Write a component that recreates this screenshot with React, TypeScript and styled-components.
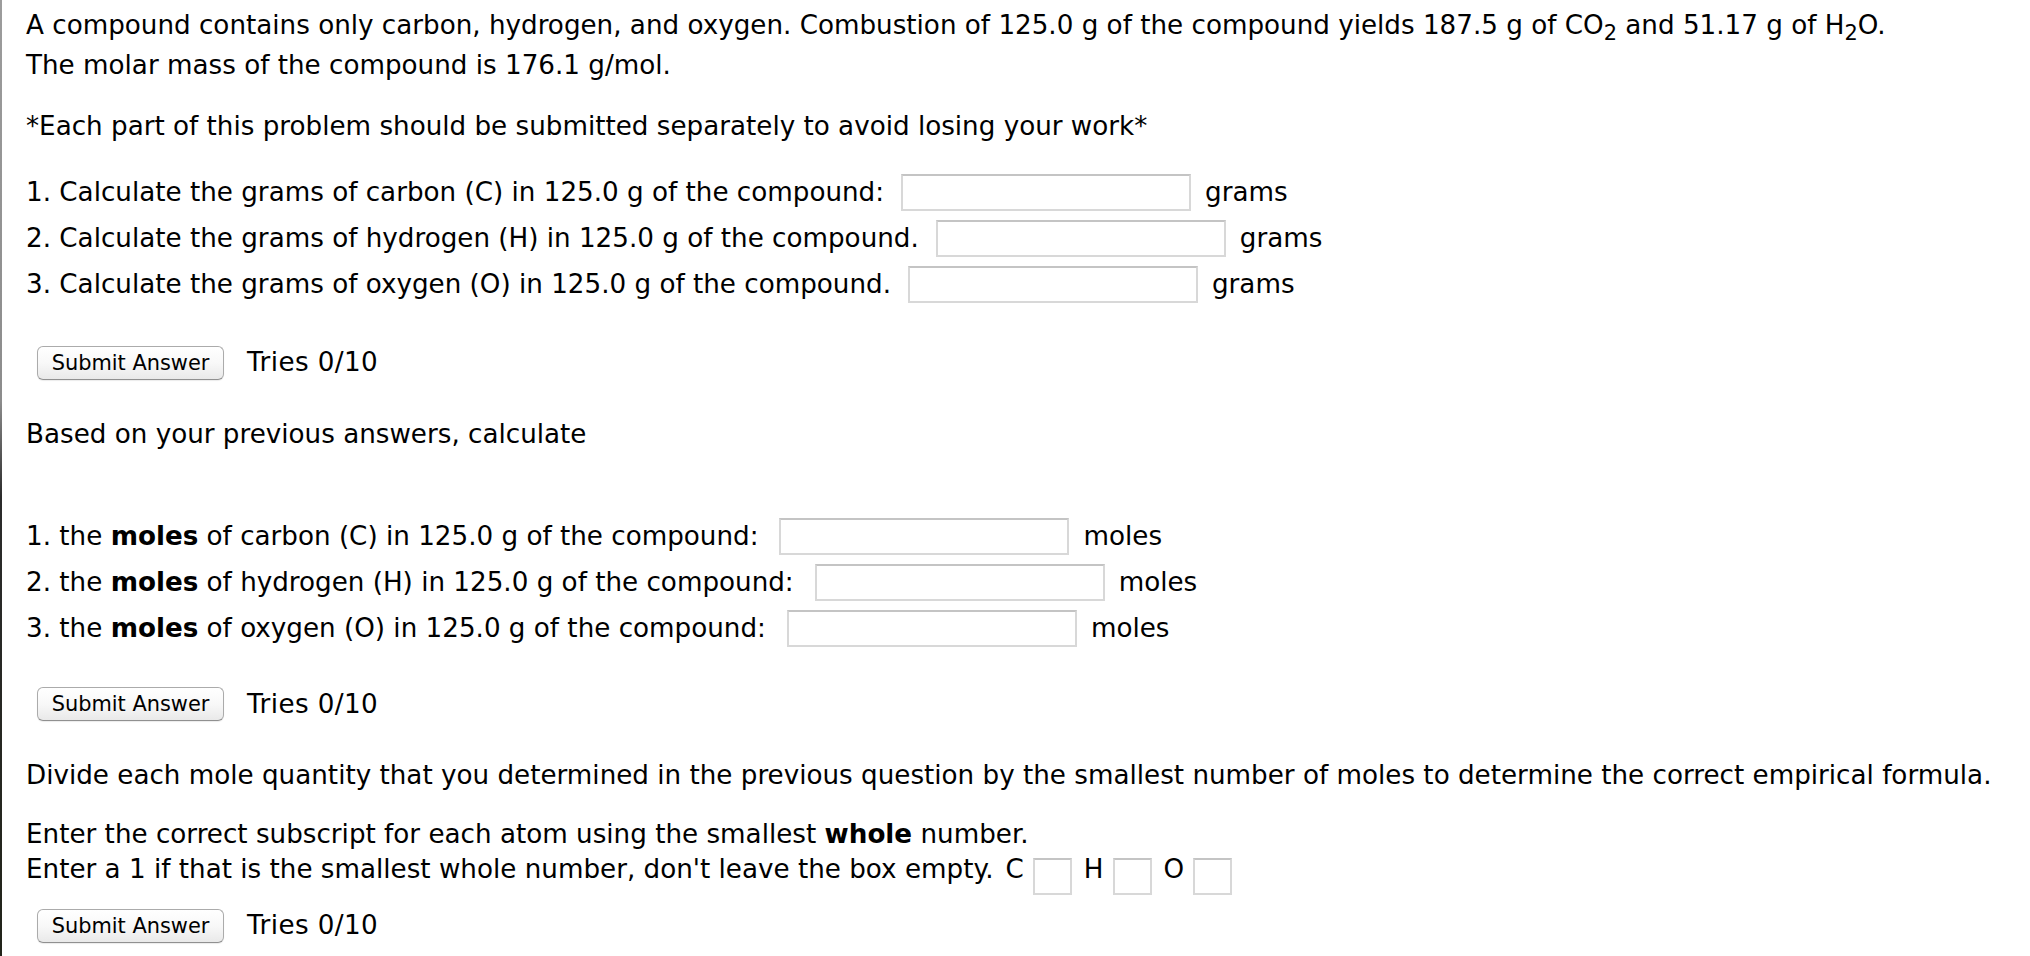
import React from 'react'
import styled, { createGlobalStyle } from 'styled-components'

const GlobalStyle = createGlobalStyle`
  html, body {
    margin: 0;
    padding: 0;
    background: #fff;
  }
  body {
    font-family: "DejaVu Sans", Verdana, sans-serif;
    font-size: 26.2px;
    color: #000;
  }
`

const Page = styled.div`
  box-sizing: border-box;
  min-height: 956px;
  padding-left: 24px;
  border-left: 2px solid #555;
  border-image: linear-gradient(to bottom, #9c9c9c 0%, #8c8c8c 42%, #2b2b2b 52%, #22241a 100%) 1;
  display: flex;
  flex-direction: column;
  align-items: flex-start;
`

const Para = styled.p<{ $top: number; $lh?: number }>`
  margin: ${p => p.$top}px 0 0 0;
  line-height: ${p => p.$lh ?? 35}px;
  white-space: nowrap;
`

const Sub = styled.sub`
  font-size: 0.8em;
  vertical-align: -0.28em;
  line-height: 0;
`

const Rows = styled.div<{ $top: number }>`
  margin-top: ${p => p.$top}px;
  display: flex;
  flex-direction: column;
  gap: 9px;
`

const Row = styled.div`
  display: flex;
  align-items: center;
  height: 37px;
  line-height: 35px;
  white-space: nowrap;
`

const AnswerBox = styled.input.attrs({ type: 'text' })<{ $gap: number }>`
  box-sizing: border-box;
  width: 290px;
  height: 37px;
  margin: 0 0 0 ${p => p.$gap}px;
  padding: 0 6px;
  border: 2px solid #d8d8d8;
  border-top-color: #c4c4c4;
  background: #fff;
  font: inherit;
  font-size: 20px;
  outline: none;
`

const Unit = styled.span`
  margin-left: 14px;
`

const ButtonRow = styled.div<{ $top: number }>`
  margin-top: ${p => p.$top}px;
  padding-left: 11px;
  display: flex;
  align-items: center;
  gap: 23px;
  line-height: 35px;
`

const SubmitButton = styled.button`
  box-sizing: border-box;
  width: 187px;
  height: 34px;
  padding: 0;
  font-family: "DejaVu Sans", Verdana, sans-serif;
  font-size: 20.9px;
  color: #000;
  border: 1px solid #ababab;
  border-bottom-color: #909090;
  border-radius: 6px;
  background: linear-gradient(to bottom, #ffffff 0%, #f8f8f8 50%, #e9e9e9 100%);
  box-shadow: 0 1px 1px rgba(0, 0, 0, 0.08);
  cursor: pointer;
`

const Tries = styled.span`
  letter-spacing: 0.4px;
`

const EnterBlock = styled.div<{ $top: number }>`
  margin-top: ${p => p.$top}px;
  line-height: 35px;
  white-space: nowrap;
`

const FormulaRow = styled.div`
  display: flex;
  align-items: flex-start;
  height: 43px;
`

const AtomLabel = styled.span`
  margin: 0 9px 0 12px;
`

const AtomBox = styled.input.attrs({ type: 'text' })`
  box-sizing: border-box;
  width: 39px;
  height: 37px;
  margin-top: 6px;
  padding: 0 4px;
  border: 2px solid #d8d8d8;
  border-top-color: #c4c4c4;
  background: #fff;
  font: inherit;
  font-size: 20px;
  outline: none;
`

const gramItems = [
  '1. Calculate the grams of carbon (C) in 125.0 g of the compound:',
  '2. Calculate the grams of hydrogen (H) in 125.0 g of the compound.',
  '3. Calculate the grams of oxygen (O) in 125.0 g of the compound.',
]

const moleItems = [
  { n: 1, el: 'carbon (C)' },
  { n: 2, el: 'hydrogen (H)' },
  { n: 3, el: 'oxygen (O)' },
]

function Submit() {
  return (
    <>
      <SubmitButton>Submit Answer</SubmitButton>
      <Tries>Tries 0/10</Tries>
    </>
  )
}

export default function App() {
  return (
    <>
      <GlobalStyle />
      <Page>
        <Para $top={4.5} $lh={40.7}>
          A compound contains only carbon, hydrogen, and oxygen. Combustion of 125.0 g of the compound yields 187.5 g of CO<Sub>2</Sub> and 51.17 g of H<Sub>2</Sub>O.
          <br />
          The molar mass of the compound is 176.1 g/mol.
        </Para>
        <Para $top={23.4}>*Each part of this problem should be submitted separately to avoid losing your work*</Para>

        <Rows $top={29.5}>
          {gramItems.map(text => (
            <Row key={text}>
              <span>{text}</span>
              <AnswerBox $gap={17} />
              <Unit>grams</Unit>
            </Row>
          ))}
        </Rows>

        <ButtonRow $top={42.5}>
          <Submit />
        </ButtonRow>

        <Para $top={37}>Based on your previous answers, calculate</Para>

        <Rows $top={65.5}>
          {moleItems.map(item => (
            <Row key={item.n}>
              <span>
                {item.n}. the <b>moles</b> of {item.el} in 125.0 g of the compound:
              </span>
              <AnswerBox $gap={21} />
              <Unit>moles</Unit>
            </Row>
          ))}
        </Rows>

        <ButtonRow $top={40}>
          <Submit />
        </ButtonRow>

        <Para $top={36.5}>
          Divide each mole quantity that you determined in the previous question by the smallest number of moles to determine the correct empirical formula.
        </Para>

        <EnterBlock $top={24}>
          <div>
            Enter the correct subscript for each atom using the smallest <b>whole</b> number.
          </div>
          <FormulaRow>
            <span>Enter a 1 if that is the smallest whole number, don't leave the box empty.</span>
            <AtomLabel>C</AtomLabel>
            <AtomBox />
            <AtomLabel>H</AtomLabel>
            <AtomBox />
            <AtomLabel>O</AtomLabel>
            <AtomBox />
          </FormulaRow>
        </EnterBlock>

        <ButtonRow $top={13}>
          <Submit />
        </ButtonRow>
      </Page>
    </>
  )
}
